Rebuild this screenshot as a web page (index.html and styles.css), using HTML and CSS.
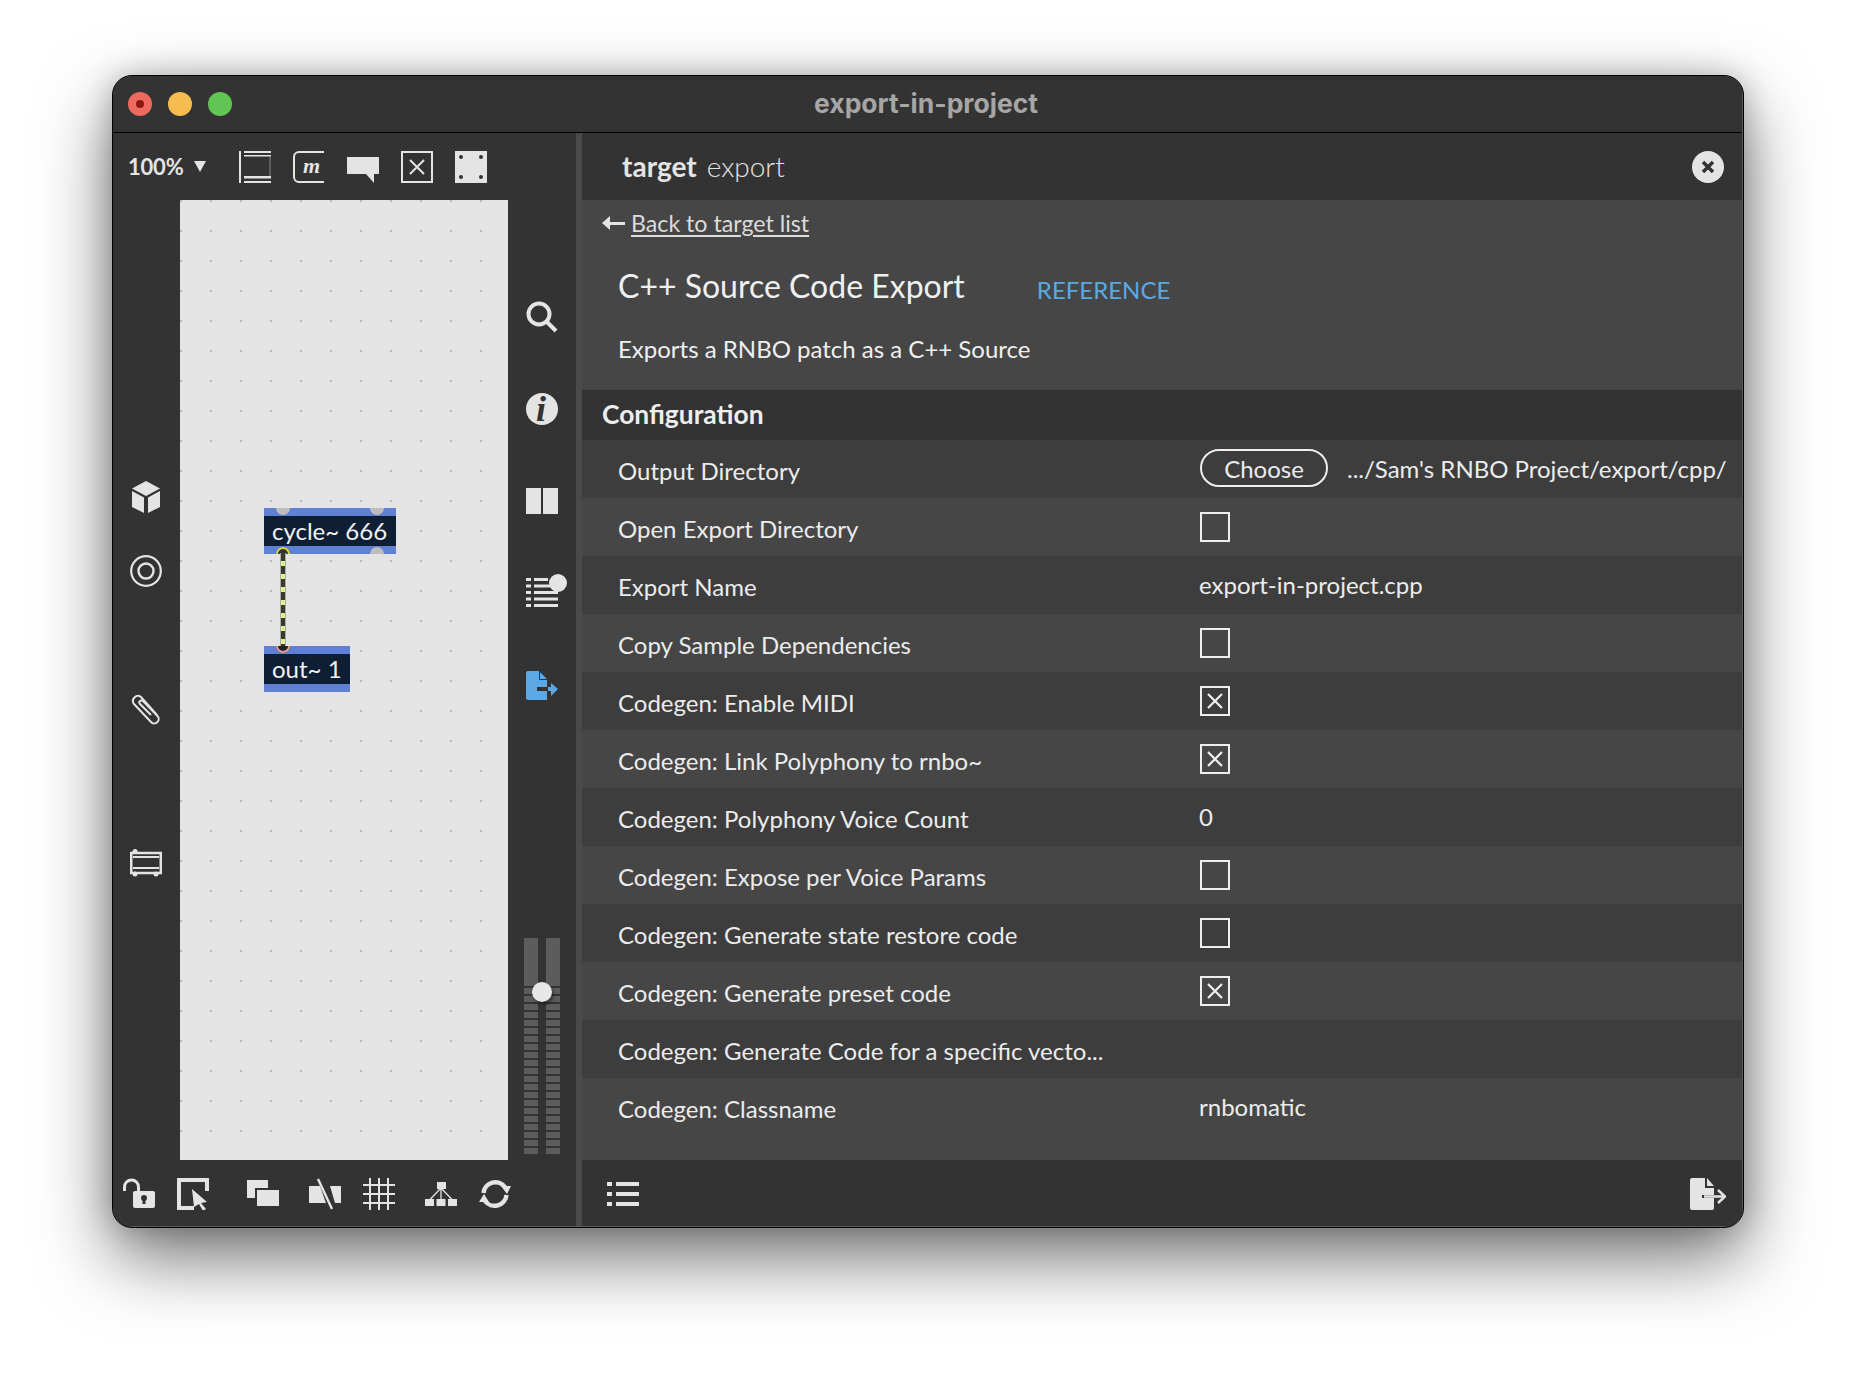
FILE: index.html
```html
<!DOCTYPE html>
<html lang="en">
<head>
<meta charset="utf-8">
<title>export-in-project</title>
<link rel="stylesheet" href="styles.css">
</head>
<body>
<div class="window">
  <header class="titlebar">
    <div class="lights"><span class="light red"></span><span class="light yellow"></span><span class="light green"></span></div>
    <div class="wintitle">export-in-project</div>
  </header>
  <div class="main">
    <section class="patcher">
      <div class="toptools">
        <div class="zoomctl">100%<svg class="caret" viewBox="0 0 12 11"><path d="M0 0h12L6 11z"/></svg></div>
        <svg class="tool" viewBox="0 0 32 32"><path d="M0 0h2v32H0zM5 0h27v2H5zM5 4h27v1.500H5zM5 25h27v2.500H5zM5 30h27v2H5z"/><path d="M31 5v20" stroke="#888" stroke-width="1"/></svg>
        <svg class="tool t-m" viewBox="0 0 32 32"><path d="M31 1H6a5 5 0 0 0-5 5v20a5 5 0 0 0 5 5h25" fill="none" stroke="#e4e4e4" stroke-width="2"/><text x="10" y="22" class="mglyph">m</text></svg>
        <svg class="tool t-c" viewBox="0 0 32 32"><path d="M0 6h32v17h-5v9l-8-9H0z"/></svg>
        <svg class="tool t-x" viewBox="0 0 32 32"><rect x="1" y="1" width="30" height="30" fill="none" stroke="#e4e4e4" stroke-width="2"/><path d="M9 9l14 14M23 9L9 23" stroke="#e4e4e4" stroke-width="2"/></svg>
        <svg class="tool t-d" viewBox="0 0 32 32"><path d="M0 0h32v32H0z"/><g fill="#333"><circle cx="6" cy="6" r="2"/><circle cx="26" cy="6" r="2"/><circle cx="6" cy="26" r="2"/><circle cx="26" cy="26" r="2"/></g></svg>
      </div>
      <div class="canvasrow">
        <aside class="leftrail">
          <svg class="ic cube" viewBox="0 0 28 32"><path d="M14 0l14 7.500-14 7.500L0 7.500z"/><path d="M0 10l12 6.500V32L0 26zM28 10l-12 6.500V32l12-6z"/></svg>
          <svg class="ic target" viewBox="0 0 32 32"><circle cx="16" cy="16" r="14.800" fill="none" stroke="#e4e4e4" stroke-width="2.200"/><circle cx="16" cy="16" r="7.500" fill="none" stroke="#e4e4e4" stroke-width="2.400"/></svg>
          <svg class="ic clip" viewBox="0 0 30 32"><path d="M26 22L10 4a5 5 0 0 0-7 7l17 18a4.400 4.400 0 0 0 6.500-6L12 8a2 2 0 0 0-3 3l11 11" fill="none" stroke="#e4e4e4" stroke-width="2"/></svg>
          <svg class="ic bus" viewBox="0 0 32 28"><rect x="1.250" y="4" width="29.500" height="20" fill="none" stroke="#e4e4e4" stroke-width="2.500"/><path d="M3 7h26v2H3zM3 18h26v2H3z"/><circle cx="5" cy="2.500" r="2.500"/><circle cx="5" cy="25" r="2.500"/><circle cx="26" cy="25" r="2.500"/></svg>
        </aside>
        <div class="canvas">
          <div class="obj cycle"><i class="port p-tl"></i><i class="port p-tr"></i><span class="objlabel">cycle~ 666</span><i class="port p-bl live"></i><i class="port p-br"></i></div>
          <div class="cord"></div>
          <div class="obj out"><i class="port p-tl in"></i><span class="objlabel">out~ 1</span></div>
        </div>
        <aside class="rightrail">
          <div class="railbtn"><svg class="ic30" viewBox="0 0 32 32"><circle cx="13" cy="13" r="10.500" fill="none" stroke="#e4e4e4" stroke-width="4"/><path d="M20.500 20.500L30 30" stroke="#e4e4e4" stroke-width="4"/></svg></div>
          <div class="railbtn"><svg class="ic30 infoic" viewBox="0 0 32 32"><circle cx="16" cy="16" r="16"/><text x="15" y="28" class="iglyph">i</text></svg></div>
          <div class="railbtn"><svg class="ic30 split" viewBox="0 0 32 26"><path d="M0 0h15v26H0zM17 0h15v26H17z"/></svg></div>
          <div class="railbtn"><svg class="listic" viewBox="0 0 41 34"><path d="M0 4h5v3H0zM8 4h14v3H8zM0 10.500h5v3H0zM8 10.500h17v3H8zM0 17h5v3H0zM8 17h24v3H8zM0 23.500h5v3H0zM8 23.500h24v3H8zM0 30h5v3H0zM8 30h24v3H8z"/><circle cx="32" cy="9" r="9"/></svg></div>
          <div class="railbtn"><svg class="expic" viewBox="0 0 32 29"><path class="fill" d="M2 0h11v9h8v20H2a2 2 0 0 1-2-2V2a2 2 0 0 1 2-2zM14 1l7 7h-7z"/><path class="fill" d="M22 16h3v-4l7 6-7 7v-5h-3z"/><path d="M11 16h11v4H11z" fill="#333"/></svg></div>
          <div class="meter">
            <div class="meterbar"><b></b><i></i><i></i><i></i><i></i><i></i><i></i><i></i><i></i><i></i><i></i><i></i><i></i><i></i><i></i><i></i><i></i><i></i><i></i><i></i><i></i><i></i></div>
            <div class="meterbar"><b></b><i></i><i></i><i></i><i></i><i></i><i></i><i></i><i></i><i></i><i></i><i></i><i></i><i></i><i></i><i></i><i></i><i></i><i></i><i></i><i></i><i></i></div>
            <span class="knob"></span>
          </div>
        </aside>
      </div>
      <div class="bottomtools">
        <svg class="bt b-lock" viewBox="0 0 32 32"><path d="M1.500 13V9a7 7 0 0 1 14 0v5" fill="none" stroke="#e4e4e4" stroke-width="3"/><path d="M12 13h18a2 2 0 0 1 2 2v13a2 2 0 0 1-2 2H12a2 2 0 0 1-2-2V15a2 2 0 0 1 2-2z"/><circle cx="21" cy="20" r="3" fill="#333"/><path d="M19.500 21h3v5h-3z" fill="#333"/></svg>
        <svg class="bt b-sel" viewBox="0 0 32 32"><path d="M0 0h32v13h-4V4H4v24h13v4H0z"/><path d="M15 11l15 13-6 1 5 6-3 2-4-7-5 3z"/></svg>
        <svg class="bt b-lay" viewBox="0 0 32 32"><path d="M0 2h21v8H8v10H0z"/><path d="M10 12h22v16H10z"/></svg>
        <svg class="bt b-flag" viewBox="0 0 32 32"><path d="M0 8h11l6 17H0zM21 8h11v17H26z"/><path d="M9 1l14 30" stroke="#e4e4e4" stroke-width="2.400" /></svg>
        <svg class="bt b-grid" viewBox="0 0 32 32"><path d="M6 0h2v32H6zM15 0h2v32h-2zM24 0h2v32h-2zM0 6h32v2H0zM0 15h32v2H0zM0 24h32v2H0z"/></svg>
        <svg class="bt b-tree" viewBox="0 0 32 32"><path d="M12 4h9v7h-9zM0 21h9v7H0zM11.500 21h9v7h-9zM23 21h9v7h-9z"/><path d="M16 10L4.500 22M16 10v12M16 10l11.500 12" fill="none" stroke="#e4e4e4" stroke-width="1.300"/></svg>
        <svg class="bt b-ref" viewBox="0 0 32 32"><path d="M4.500 15A12 12 0 0 1 26 9" fill="none" stroke="#e4e4e4" stroke-width="4.500"/><path d="M27.500 17A12 12 0 0 1 6 23" fill="none" stroke="#e4e4e4" stroke-width="4.500"/><path d="M22 8h10l-4 8zM0 24h10l-5-8z"/></svg>
      </div>
    </section>
    <div class="splitter"></div>
    <section class="panel">
      <div class="panelhead">
        <div class="paneltitle"><strong>target</strong><span>export</span></div>
        <svg class="closebtn" viewBox="0 0 32 32"><circle cx="16" cy="16" r="16"/><path d="M11 11l10 10M21 11L11 21" stroke="#333" stroke-width="3.400"/></svg>
      </div>
      <div class="panelbody">
        <div class="backrow"><svg class="arrow" viewBox="0 0 23 14"><path d="M8 0L0 7l8 7v-5h15V6H8z"/></svg><a class="backlink">Back to target list</a></div>
        <div class="headline"><h1>C++ Source Code Export</h1><span class="ref">REFERENCE</span></div>
        <p class="desc">Exports a RNBO patch as a C++ Source</p>
        <h2 class="config">Configuration</h2>
        <div class="rows">
          <div class="row"><span class="lbl">Output Directory</span><div class="val"><span class="choose">Choose</span><span class="path">.../Sam's RNBO Project/export/cpp/</span></div></div>
          <div class="row"><span class="lbl">Open Export Directory</span><div class="val"><span class="chk"></span></div></div>
          <div class="row"><span class="lbl">Export Name</span><div class="val"><span class="txt">export-in-project.cpp</span></div></div>
          <div class="row"><span class="lbl">Copy Sample Dependencies</span><div class="val"><span class="chk"></span></div></div>
          <div class="row"><span class="lbl">Codegen: Enable MIDI</span><div class="val"><span class="chk on"><svg viewBox="0 0 26 26"><path d="M6 6l14 14M20 6L6 20"/></svg></span></div></div>
          <div class="row"><span class="lbl">Codegen: Link Polyphony to rnbo~</span><div class="val"><span class="chk on"><svg viewBox="0 0 26 26"><path d="M6 6l14 14M20 6L6 20"/></svg></span></div></div>
          <div class="row"><span class="lbl">Codegen: Polyphony Voice Count</span><div class="val"><span class="txt">0</span></div></div>
          <div class="row"><span class="lbl">Codegen: Expose per Voice Params</span><div class="val"><span class="chk"></span></div></div>
          <div class="row"><span class="lbl">Codegen: Generate state restore code</span><div class="val"><span class="chk"></span></div></div>
          <div class="row"><span class="lbl">Codegen: Generate preset code</span><div class="val"><span class="chk on"><svg viewBox="0 0 26 26"><path d="M6 6l14 14M20 6L6 20"/></svg></span></div></div>
          <div class="row"><span class="lbl">Codegen: Generate Code for a specific vecto...</span><div class="val"></div></div>
          <div class="row"><span class="lbl">Codegen: Classname</span><div class="val"><span class="txt">rnbomatic</span></div></div>
        </div>
      </div>
      <div class="panelfoot">
        <svg class="foot-list" viewBox="0 0 32 26"><path d="M0 1h5v4H0zM0 11h5v4H0zM0 21h5v4H0zM9 1h23v4H9zM9 11h23v4H9zM9 21h23v4H9z"/></svg>
        <svg class="foot-exp" viewBox="0 0 36 32"><path d="M2 0h13v10h9v7H12v3h12v10a2 2 0 0 1-2 2H2a2 2 0 0 1-2-2V2a2 2 0 0 1 2-2zM17 0l7 8h-7z"/><path d="M14 18.500h19" stroke="#e4e4e4" stroke-width="2.500"/><path d="M28 12l7 6.500-7 6.500" fill="none" stroke="#e4e4e4" stroke-width="2.500"/></svg>
      </div>
    </section>
  </div>
</div>
</body>
</html>
```
FILE: styles.css
```css
* { box-sizing: border-box; }
html, body { margin: 0; padding: 0; background: #fff; }
body { width: 1856px; height: 1376px; overflow: hidden; font-family: Lato, "Open Sans", sans-serif; color: #e8e8e8; padding: 75px 0 0 112px; }
.window { width: 1632px; height: 1153px; border-radius: 20px; background: #333; border: 1px solid #000; box-shadow: inset 0 0 0 1px #5a5a5a, 0 30px 72px rgba(0,0,0,.55), 0 0 30px rgba(0,0,0,.22); display: flex; flex-direction: column; overflow: hidden; position: relative; }
.titlebar { height: 57px; flex: none; background: #333; border-bottom: 1px solid #000; display: flex; align-items: center; position: relative; margin-right: 1px; }
.lights { display: flex; gap: 16px; padding-left: 15px; }
.light { width: 24px; height: 24px; border-radius: 50%; display: flex; align-items: center; justify-content: center; }
.red { background: #ee6a5f; }
.red::after { content: ""; width: 8px; height: 8px; border-radius: 50%; background: #8c1a10; }
.yellow { background: #f5bd4f; }
.green { background: #61c554; }
.wintitle { position: absolute; left: 0; right: 0; top: 12px; text-align: center; font-family: Inter, sans-serif; font-weight: 700; font-size: 26.5px; line-height: 30px; color: #a6a6a6; padding-right: 3px; }
.main { flex: 1; display: flex; min-height: 0; margin: 0 1px 1px 0; }
.patcher { width: 463px; flex: none; display: flex; flex-direction: column; background: #333; }
svg { display: block; fill: #e4e4e4; flex: none; }
.toptools { height: 67px; flex: none; display: flex; align-items: center; padding: 0 0 0 15px; }
.zoomctl { font-size: 22px; font-weight: 700; color: #e4e4e4; display: flex; align-items: center; width: 111px; letter-spacing: -.2px; }
.caret { width: 12px; height: 11px; margin-left: 10px; }
.tool { width: 32px; height: 32px; margin-right: 22px; }
.mglyph { font-family: "Liberation Serif", serif; font-style: italic; font-weight: 700; font-size: 22px; fill: #e4e4e4; }
.canvasrow { height: 960px; flex: none; display: flex; }
.leftrail { width: 67px; flex: none; display: flex; flex-direction: column; align-items: center; padding: 281px 1px 0 0; }
.ic { width: 30px; }
.cube { width: 28px; height: 32px; margin-bottom: 42px; }
.target { width: 32px; height: 32px; margin-bottom: 106px; }
.clip { width: 30px; height: 32px; margin-bottom: 124px; }
.bus { width: 32px; height: 28px; }
.canvas { width: 328px; flex: none; background-color: #e4e4e4; background-image: radial-gradient(circle at 1px 1px, #b9b9b9 1.1px, transparent 1.4px); background-size: 30px 30px; position: relative; overflow: hidden; }
.obj { position: absolute; background: #0e1f35; border-top: 8px solid #6080d4; border-bottom: 8px solid #6080d4; color: #f2f2f2; font-size: 24px; display: flex; align-items: center; height: 46px; padding-left: 8px; }
.cycle { left: 84px; top: 308px; width: 132px; }
.out { left: 84px; top: 446px; width: 86px; }
.objlabel { position: relative; top: -1px; white-space: nowrap; }
.port { position: absolute; width: 14px; height: 14px; border-radius: 50%; background: #bdbdbd; }
.p-tl { left: 12px; top: -15px; clip-path: inset(7px 0 0 0); }
.p-tr { right: 12px; top: -15px; clip-path: inset(7px 0 0 0); }
.p-bl { left: 12px; bottom: -15px; clip-path: inset(0 0 7px 0); }
.p-br { right: 12px; bottom: -15px; clip-path: inset(0 0 7px 0); }
.p-bl.live { background: #333; box-shadow: inset 0 0 0 2px #d9d84a; }
.p-tl.in { background: #222; box-shadow: inset 0 0 0 2px #e9a08a; }
.cord { position: absolute; left: 100px; top: 353px; width: 6px; height: 96px; background: repeating-linear-gradient(to bottom, #3a3a28 0 8px, #dcf58a 8px 13px); border-left: 1px solid #aaa; border-right: 1px solid #aaa; }
.rightrail { width: 68px; flex: none; display: flex; flex-direction: column; align-items: center; padding: 71px 0 6px; position: relative; }
.railbtn { height: 92px; flex: none; display: flex; align-items: center; justify-content: center; width: 100%; }
.ic30 { width: 32px; height: 32px; }
.infoic { overflow: visible; }
.split { height: 26px; }
.iglyph { font-family: "Liberation Serif", serif; font-style: italic; font-weight: 700; font-size: 36px; fill: #333; text-anchor: middle; }
.listic { width: 41px; height: 34px; margin: 0 0 4px 9px; }
.expic { width: 32px; height: 29px; }
.expic .fill { fill: #5aa9e6; }
.meter { margin-top: auto; height: 216px; width: 36px; display: flex; justify-content: space-between; position: relative; }
.meterbar { width: 14px; display: flex; flex-direction: column; gap: 2px; }
.meterbar b { height: 48px; background: #5c5c5c; display: block; flex: none; }
.meterbar i { height: 6px; background: #5c5c5c; display: block; flex: none; }
.knob { position: absolute; left: 8px; top: 44px; width: 20px; height: 20px; border-radius: 50%; background: #e8e8e8; box-shadow: 2px 3px 3px rgba(0,0,0,.35); }
.bottomtools { flex: 1; display: flex; align-items: flex-start; padding: 18px 0 0 10px; }
.bt { width: 32px; height: 32px; }
.b-lock { margin-right: 22px; }
.b-sel { margin-right: 38px; }
.b-lay { margin-right: 30px; }
.b-flag { margin-right: 22px; }
.b-grid { margin-right: 30px; }
.b-tree { margin-right: 22px; }
.splitter { width: 6px; flex: none; background: #4a4a4a; }
.panel { flex: 1; min-width: 0; display: flex; flex-direction: column; background: #464646; }
.panelhead { height: 67px; flex: none; background: #333; display: flex; align-items: center; justify-content: space-between; padding: 0 18px 0 40px; }
.paneltitle { font-size: 28px; display: flex; gap: 10px; color: #e4e4e4; padding-bottom: 2px; }
.paneltitle strong { font-weight: 700; }
.paneltitle span { font-weight: 300; }
.closebtn { width: 32px; height: 32px; }
.panelbody { height: 960px; flex: none; background: #464646; display: flex; flex-direction: column; }
.backrow { height: 48px; display: flex; align-items: center; padding: 0 0 2px 20px; flex: none; }
.arrow { width: 23px; height: 14px; margin-right: 6px; }
.backlink { font-size: 23.2px; text-decoration: underline; text-underline-offset: 3px; color: #dcdcdc; }
.headline { display: flex; align-items: center; padding: 0 0 2px 36px; height: 76px; flex: none; }
h1 { margin: 0; font-size: 32px; font-weight: 400; color: #f0f0f0; }
.ref { color: #5aa9e6; font-size: 24px; margin-left: 72px; position: relative; top: 4px; }
.desc { margin: 0; font-size: 24px; padding-left: 36px; height: 66px; flex: none; line-height: 50px; color: #f0f0f0; }
.config { margin: 0; height: 50px; flex: none; background: #333; font-size: 26.400px; font-weight: 700; padding-left: 20px; line-height: 48px; color: #eee; }
.rows { display: flex; flex-direction: column; }
.row { height: 58px; flex: none; display: flex; align-items: center; background: #464646; font-size: 24px; }
.row:nth-child(odd) { background: #3d3d3d; }
.lbl { width: 618px; flex: none; padding-left: 36px; position: relative; top: 1px; white-space: nowrap; color: #ececec; }
.val { display: flex; align-items: center; position: relative; top: -1px; color: #ececec; white-space: nowrap; }
.txt { margin-left: -1px; }
.choose { width: 128px; height: 38px; border: 2px solid #eee; border-radius: 19px; display: flex; align-items: center; justify-content: center; margin-right: 19px; }
.chk { width: 30px; height: 30px; border: 2px solid #eee; display: block; position: relative; top: 1px; }
.chk svg { width: 26px; height: 26px; fill: none; stroke: #eee; stroke-width: 2.200; }
.panelfoot { flex: 1; background: #333; display: flex; align-items: flex-start; justify-content: space-between; padding: 18px 16px 0 25px; }
.foot-list { width: 32px; height: 26px; margin-top: 3px; }
.foot-exp { width: 36px; height: 32px; }
```
